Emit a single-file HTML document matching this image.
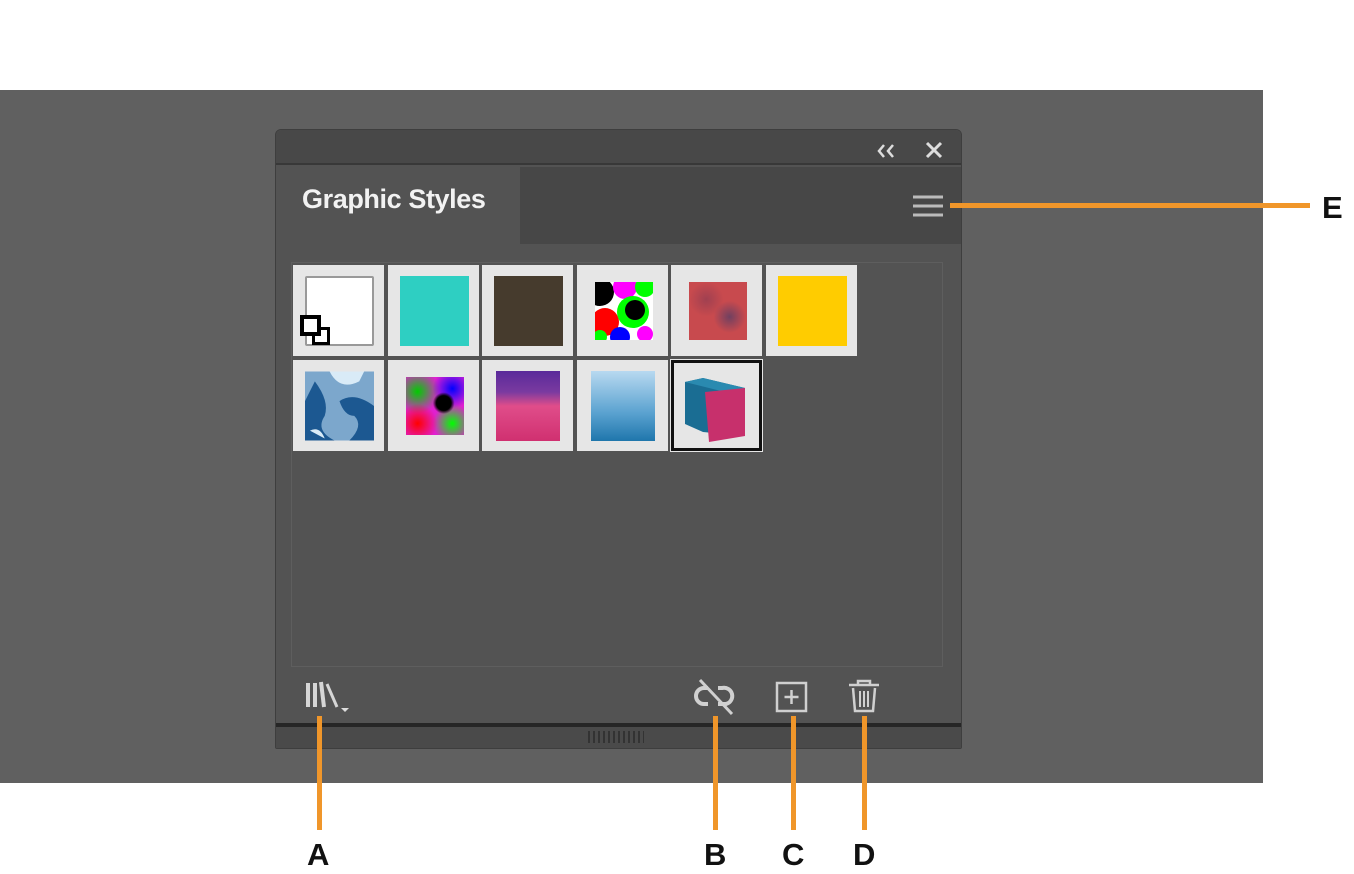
<!DOCTYPE html>
<html><head><meta charset="utf-8"><style>
*{margin:0;padding:0;box-sizing:border-box}
body{width:1354px;height:874px;background:#fff;position:relative;overflow:hidden;font-family:"Liberation Sans",sans-serif}
.a{position:absolute}
.sw{position:absolute;width:91px;height:91px;background:#e6e6e6}
.in{position:absolute;left:12px;top:11px;width:69px;height:70px}
.or{position:absolute;background:#f0962a}
.lb{position:absolute;font:bold 31px "Liberation Sans",sans-serif;color:#111}
</style></head><body>
<div class="a" style="left:0;top:90px;width:1263px;height:693px;background:#606060"></div>
<div class="a" style="left:275px;top:129px;width:687px;height:620px;background:#535353;border:1px solid #3e3e3e;border-radius:6px 6px 2px 2px"></div>
<div class="a" style="left:276px;top:130px;width:685px;height:35px;background:#484848;border-radius:6px 6px 0 0;border-bottom:2px solid #383838"></div>
<svg class="a" style="left:876px;top:143px" width="22" height="16"><path d="M8 2L3 8L8 14M17 2L12 8L17 14" fill="none" stroke="#ddd" stroke-width="2.5"/></svg>
<svg class="a" style="left:924px;top:140px" width="20" height="20"><path d="M3 3L17 17M17 3L3 17" stroke="#ddd" stroke-width="3"/></svg>
<div class="a" style="left:520px;top:167px;width:441px;height:77px;background:#474747"></div>
<div class="a" style="left:277px;top:167px;width:243px;height:77px;background:#535353"></div>
<div class="a" style="left:302px;top:184px;color:#f2f2f2;font-size:27px;font-weight:bold;letter-spacing:-0.4px">Graphic Styles</div>
<svg class="a" style="left:912px;top:194px" width="32" height="24"><path d="M1 3H31M1 12H31M1 21H31" stroke="#bbb" stroke-width="3"/></svg>
<div class="a" style="left:291px;top:262px;width:652px;height:405px;border:1px solid #5e5e5e"></div>
<div class="sw" style="left:293px;top:265px"><div class="in" style="background:#fff;border:2px solid #999;border-radius:2px"></div>
<svg class="a" style="left:7px;top:50px" width="34" height="34"><rect x="12" y="12" width="18" height="18" fill="#000"/><rect x="15" y="15" width="12" height="12" fill="#fff"/><rect x="2" y="2" width="17" height="17" fill="#fff" stroke="#000" stroke-width="4"/></svg></div>
<div class="sw" style="left:388px;top:265px"><div class="in" style="background:#2ecfc2"></div></div>
<div class="sw" style="left:482px;top:265px"><div class="in" style="background:#463b2d"></div></div>
<div class="sw" style="left:577px;top:265px"><svg class="in" style="left:18px;top:17px;width:58px;height:58px" viewBox="0 0 58 58"><rect width="58" height="58" fill="#fff"/><circle cx="5" cy="10" r="14" fill="#000"/><circle cx="30" cy="5" r="12" fill="#f0f"/><circle cx="50" cy="5" r="10" fill="#0f0"/><circle cx="10" cy="40" r="14" fill="#f00"/><circle cx="38" cy="30" r="16" fill="#0f0"/><circle cx="40" cy="28" r="10" fill="#000"/><circle cx="25" cy="55" r="10" fill="#00f"/><circle cx="50" cy="52" r="8" fill="#f0f"/><circle cx="5" cy="55" r="7" fill="#0f0"/></svg></div>
<div class="sw" style="left:671px;top:265px"><div class="in" style="left:18px;top:17px;width:58px;height:58px;background:radial-gradient(circle at 30% 30%,#a04050 0,transparent 30%),radial-gradient(circle at 70% 60%,#704060 0,transparent 30%),#c84a4e"></div></div>
<div class="sw" style="left:766px;top:265px"><div class="in" style="background:#ffcc00"></div></div>
<div class="sw" style="left:293px;top:360px"><svg class="in" viewBox="0 0 70 70"><rect width="70" height="70" fill="#c8dff0"/><rect x="0" y="0" width="70" height="70" fill="#4a82b4" opacity=".6"/><path d="M10 10Q25 30 20 45Q10 60 30 70H0V30Q5 20 10 10ZM35 30Q50 20 70 35V70H45Q60 55 50 45Q40 45 35 30Z" fill="#1c5891"/><path d="M25 0Q35 20 55 10L60 0ZM5 60Q15 55 20 68" fill="#d9ebf7"/></svg></div>
<div class="sw" style="left:388px;top:360px"><div class="in" style="left:18px;top:17px;width:58px;height:58px;background:radial-gradient(circle at 65% 45%,#000 0,#000 15%,transparent 22%),radial-gradient(circle at 20% 80%,#f00 0,transparent 30%),radial-gradient(circle at 80% 80%,#0f0 0,transparent 30%),radial-gradient(circle at 80% 20%,#00f 0,transparent 30%),radial-gradient(circle at 20% 25%,#0c0 0,transparent 35%),#e020d0"></div></div>
<div class="sw" style="left:482px;top:360px"><div class="in" style="left:14px;top:11px;width:64px;height:70px;background:linear-gradient(#5a2a9a 0,#7a3aa0 30%,#e04d8a 50%,#d03070 100%)"></div></div>
<div class="sw" style="left:577px;top:360px"><div class="in" style="left:14px;top:11px;width:64px;height:70px;background:linear-gradient(#b8d9f0,#5aa2d0 60%,#1f76ac)"></div></div>
<div class="sw" style="left:671px;top:360px;border:3px solid #111;outline:1px solid #e6e6e6"><svg class="a" style="left:7px;top:7px" width="72" height="72" viewBox="0 0 72 72"><path d="M4 12L22 8L64 18V66L22 62L4 54Z" fill="#1a6d93"/><path d="M4 12L22 8L64 18L44 22Z" fill="#2a8ab0"/><path d="M24 22L64 18V66L28 72Z" fill="#c7306c"/></svg></div>
<svg class="a" style="left:305px;top:680px" width="50" height="34"><path d="M3 3V27M10 3V27" stroke="#d6d6d6" stroke-width="4"/><path d="M16 2L19 27" stroke="#d6d6d6" stroke-width="4"/><path d="M22 4L32 27" stroke="#d6d6d6" stroke-width="3"/><path d="M36 28H44L40 32Z" fill="#ddd"/></svg>
<svg class="a" style="left:694px;top:678px" width="44" height="38"><path d="M14 10H10A8 8 0 0 0 10 26H14M24 10H28A8 8 0 0 1 32 26H24" fill="none" stroke="#d0d0d0" stroke-width="4"/><path d="M6 2L38 36" stroke="#d0d0d0" stroke-width="3"/></svg>
<svg class="a" style="left:775px;top:681px" width="34" height="32"><rect x="2" y="2" width="29" height="28" fill="none" stroke="#d0d0d0" stroke-width="2.5"/><path d="M16.5 9V23M9.5 16H23.5" stroke="#d0d0d0" stroke-width="2.5"/></svg>
<svg class="a" style="left:846px;top:678px" width="36" height="36"><path d="M3 7H33M12 6V3H24V6" fill="none" stroke="#d0d0d0" stroke-width="2.5"/><path d="M7 10L9 33H27L29 10" fill="none" stroke="#d0d0d0" stroke-width="2.5"/><path d="M14 13V29M18 13V29M22 13V29" stroke="#d0d0d0" stroke-width="2"/></svg>
<div class="a" style="left:276px;top:723px;width:685px;height:4px;background:#262626"></div>
<div class="a" style="left:276px;top:727px;width:685px;height:21px;background:#4a4a4a"></div>
<div class="a" style="left:588px;top:731px;width:56px;height:12px;background:repeating-linear-gradient(90deg,#333 0 2px,transparent 2px 5px)"></div>
<div class="or" style="left:950px;top:203px;width:360px;height:5px"></div>
<div class="lb" style="left:1322px;top:190px">E</div>
<div class="or" style="left:317px;top:716px;width:5px;height:114px"></div>
<div class="or" style="left:713px;top:716px;width:5px;height:114px"></div>
<div class="or" style="left:791px;top:716px;width:5px;height:114px"></div>
<div class="or" style="left:862px;top:716px;width:5px;height:114px"></div>
<div class="lb" style="left:307px;top:837px">A</div>
<div class="lb" style="left:704px;top:837px">B</div>
<div class="lb" style="left:782px;top:837px">C</div>
<div class="lb" style="left:853px;top:837px">D</div>
</body></html>
